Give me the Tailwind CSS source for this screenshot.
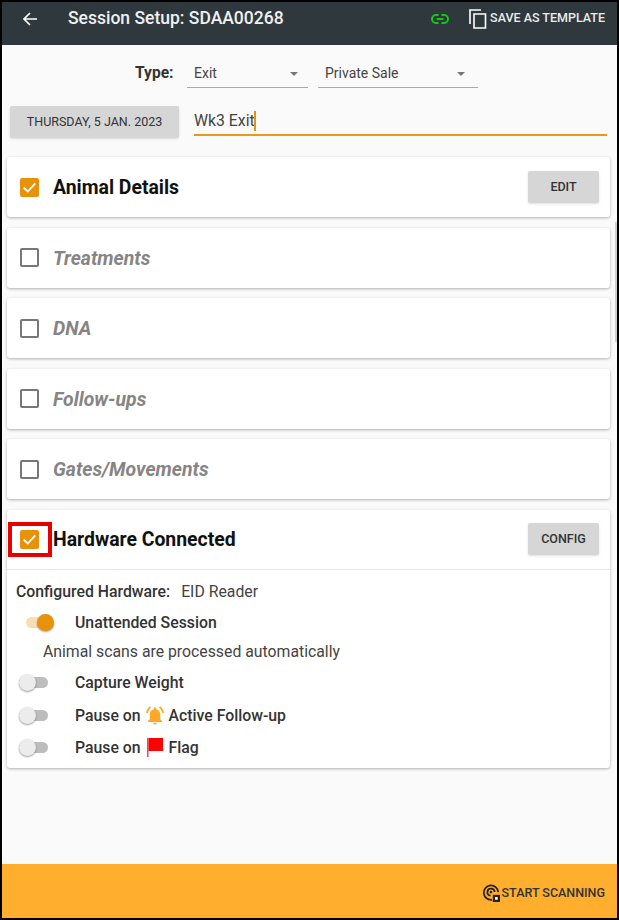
<!DOCTYPE html>
<html lang="en">
<head>
<meta charset="UTF-8">
<title>Session Setup</title>
<script src="https://cdn.jsdelivr.net/npm/@tailwindcss/browser@4"></script>
</head>
<body class="bg-black">
<div class="relative m-[2px] flex h-[916px] w-[615px] flex-col overflow-hidden bg-[#fafafa] font-['Roboto',sans-serif] text-[#212121]">

  <!-- top bar -->
  <header class="flex h-[43px] shrink-0 items-center bg-[#2f383d] pr-[12px] pb-[10px] pl-[20px] text-white">
    <svg class="h-[16px] w-[16px]" viewBox="0 0 16 16" fill="none" stroke="#fff" stroke-width="1.7"><path d="M15 8H2M8 2 2 8l6 6"/></svg>
    <h1 class="ml-[30px] text-[17.5px] font-medium text-[#f0f0f0]">Session Setup: SDAA00268</h1>
    <svg class="ml-auto h-[18px] w-[18px]" viewBox="0 0 18 18" fill="none" stroke="#14c814" stroke-width="2"><path d="M7.5 5H5a4 4 0 0 0 0 8h2.500M10.500 5H13a4 4 0 0 1 0 8h-2.500M5.500 9h7"/></svg>
    <svg class="ml-[20px] h-[20px] w-[18px]" viewBox="0 0 18 20" fill="none" stroke="#fff" stroke-width="1.600"><path d="M1 15V1h11"/><path d="M5 5h11.500v14H5z"/></svg>
    <span class="ml-[3px] text-[12.5px] font-medium text-[#ececec]">SAVE AS TEMPLATE</span>
  </header>

  <div class="flex flex-col px-[5px]">
    <!-- type row -->
    <div class="mt-[14px] flex h-[30px] items-center">
      <span class="ml-[128px] w-[52px] text-[15.6px] font-bold text-[#333]">Type:</span>
      <div class="flex h-[27px] w-[121px] items-center justify-between border-b border-[#aaa] pr-[10px] pl-[7px] text-[14px] text-[#444]">Exit<span class="h-0 w-0 border-x-[4px] border-t-[4px] border-x-transparent border-t-[#777]"></span></div>
      <div class="ml-[10px] flex h-[27px] w-[160px] items-center justify-between border-b border-[#aaa] pr-[13px] pl-[7px] text-[14px] text-[#444]">Private Sale<span class="h-0 w-0 border-x-[4px] border-t-[4px] border-x-transparent border-t-[#777]"></span></div>
    </div>
    <!-- date row -->
    <div class="mt-[17px] flex h-[32px] items-start">
      <button class="ml-[3px] flex h-[32px] w-[169px] items-center justify-center rounded-[2px] bg-[#d6d6d6] text-[12.5px] text-[#333] shadow-sm">THURSDAY, 5 JAN. 2023</button>
      <div class="ml-[15px] flex h-[30px] w-[413px] items-center border-b-2 border-[#e69a1c] pt-[2px] text-[15.8px] text-[#444]"><span>Wk3 Exit</span><span class="ml-[-1px] h-[20px] w-[2px] bg-[#e8920c]"></span></div>
    </div>

    <!-- section cards -->
    <section class="mt-[19px] flex h-[60px] w-[603px] items-center rounded-[3px] bg-white pr-[11px] pl-[13px] shadow-[0_1px_3px_rgba(0,0,0,0.3)]">
      <span class="flex h-[19px] w-[19px] items-center justify-center rounded-[2px] bg-[#e8920c]"><svg class="h-[15px] w-[15px]" viewBox="0 0 13 13" fill="none" stroke="#fff" stroke-width="1.600"><path d="M1.500 6.500 5 10l6.500-7"/></svg></span>
      <span class="ml-[14px] pt-[2px] text-[19.4px] font-bold text-[#111]">Animal Details</span>
      <button class="ml-auto h-[32px] w-[71px] rounded-[2px] bg-[#d6d6d6] text-[12.5px] font-medium text-[#333] shadow-sm">EDIT</button>
    </section>
    <section class="mt-[10.5px] flex h-[60px] w-[603px] items-center rounded-[3px] bg-white pl-[13px] shadow-[0_1px_3px_rgba(0,0,0,0.3)]">
      <span class="h-[19px] w-[19px] rounded-[2px] border-2 border-[#777]"></span>
      <span class="ml-[14px] pt-[2px] text-[19.4px] font-bold text-[#858585] italic">Treatments</span>
    </section>
    <section class="mt-[10.5px] flex h-[60px] w-[603px] items-center rounded-[3px] bg-white pl-[13px] shadow-[0_1px_3px_rgba(0,0,0,0.3)]">
      <span class="h-[19px] w-[19px] rounded-[2px] border-2 border-[#777]"></span>
      <span class="ml-[14px] pt-[2px] text-[19.4px] font-bold text-[#858585] italic">DNA</span>
    </section>
    <section class="mt-[10.5px] flex h-[60px] w-[603px] items-center rounded-[3px] bg-white pl-[13px] shadow-[0_1px_3px_rgba(0,0,0,0.3)]">
      <span class="h-[19px] w-[19px] rounded-[2px] border-2 border-[#777]"></span>
      <span class="ml-[14px] pt-[2px] text-[19.4px] font-bold text-[#858585] italic">Follow-ups</span>
    </section>
    <section class="mt-[10.5px] flex h-[60px] w-[603px] items-center rounded-[3px] bg-white pl-[13px] shadow-[0_1px_3px_rgba(0,0,0,0.3)]">
      <span class="h-[19px] w-[19px] rounded-[2px] border-2 border-[#777]"></span>
      <span class="ml-[14px] pt-[2px] text-[19.4px] font-bold text-[#858585] italic">Gates/Movements</span>
    </section>

    <!-- hardware card -->
    <section class="mt-[10.5px] h-[258px] w-[603px] rounded-[3px] bg-white shadow-[0_1px_3px_rgba(0,0,0,0.3)]">
      <div class="flex h-[60px] items-center border-b border-[#e8e8e8] pr-[11px] pl-[13px]">
        <span class="relative flex h-[19px] w-[19px] items-center justify-center rounded-[2px] bg-[#e8920c]">
          <svg class="h-[15px] w-[15px]" viewBox="0 0 13 13" fill="none" stroke="#fff" stroke-width="1.600"><path d="M1.500 6.500 5 10l6.500-7"/></svg>
          <!-- red annotation box -->
          <span class="absolute top-[-8px] left-[-12px] h-[35px] w-[44px] border-4 border-[#e60000]"></span>
        </span>
        <span class="ml-[14px] pt-[2px] text-[19.4px] font-bold text-[#111]">Hardware Connected</span>
        <button class="ml-auto h-[32px] w-[71px] rounded-[2px] bg-[#d6d6d6] text-[12.5px] font-medium text-[#333] shadow-sm">CONFIG</button>
      </div>
      <div class="mt-[12px] flex h-[20px] items-center pl-[9px] text-[15.8px]">
        <span class="font-medium text-[#333]">Configured Hardware:</span>
        <span class="ml-[11px] text-[#444]">EID Reader</span>
      </div>
      <div class="mt-[11px] flex h-[20px] items-center pl-[19px]">
        <span class="relative block h-[11px] w-[24px] rounded-full bg-[#f8deb4]"><span class="absolute top-[-3px] right-[-4px] h-[17px] w-[17px] rounded-full bg-[#e8920c] shadow-[0_1px_2px_rgba(0,0,0,0.4)]"></span></span>
        <span class="ml-[25px] text-[15.8px] font-medium text-[#333]">Unattended Session</span>
      </div>
      <div class="mt-[9px] flex h-[20px] items-center pl-[36px] text-[15.8px] text-[#444]">Animal scans are processed automatically</div>
      <div class="mt-[11px] flex h-[20px] items-center pl-[12px]">
        <span class="relative block h-[11px] w-[29px] rounded-full bg-[#bdbdbd]"><span class="absolute top-[-3px] left-0 h-[17px] w-[17px] rounded-full bg-[#ececec] shadow-[0_1px_2px_rgba(0,0,0,0.4)]"></span></span>
        <span class="ml-[27px] text-[15.8px] font-medium text-[#333]">Capture Weight</span>
      </div>
      <div class="mt-[13px] flex h-[20px] items-center pl-[12px]">
        <span class="relative block h-[11px] w-[29px] rounded-full bg-[#bdbdbd]"><span class="absolute top-[-3px] left-0 h-[17px] w-[17px] rounded-full bg-[#ececec] shadow-[0_1px_2px_rgba(0,0,0,0.4)]"></span></span>
        <span class="ml-[27px] text-[15.8px] font-medium text-[#333]">Pause on</span>
        <svg class="mr-[5px] ml-[5px] h-[19px] w-[18px]" viewBox="2 1 20 21.500" fill="#ffa726"><path d="M12 22c1.100 0 2-.9 2-2h-4c0 1.100.9 2 2 2zm6-6v-5c0-3.100-1.600-5.600-4.500-6.300V4c0-.8-.7-1.500-1.500-1.500s-1.500.7-1.500 1.500v.7C7.600 5.400 6 7.900 6 11v5l-2 2v1h16v-1l-2-2z"/><path d="M7.600 2.600 6.200 1.200C3.800 3 2.200 5.800 2 9h2c.2-2.600 1.600-5 3.600-6.400zM20 9h2c-.2-3.200-1.800-6-4.200-7.800l-1.400 1.400c2 1.400 3.400 3.800 3.600 6.400z"/></svg>
        <span class="text-[15.8px] font-medium text-[#333]">Active Follow-up</span>
      </div>
      <div class="mt-[12px] flex h-[20px] items-center pl-[12px]">
        <span class="relative block h-[11px] w-[29px] rounded-full bg-[#bdbdbd]"><span class="absolute top-[-3px] left-0 h-[17px] w-[17px] rounded-full bg-[#ececec] shadow-[0_1px_2px_rgba(0,0,0,0.4)]"></span></span>
        <span class="ml-[27px] text-[15.8px] font-medium text-[#333]">Pause on</span>
        <svg class="mr-[6px] ml-[6px] h-[19px] w-[16px]" viewBox="0 0 16 19"><path d="M0 0h1.500v19H0z" fill="#f44"/><path d="M1.500 0H16v13H1.500z" fill="#f00"/></svg>
        <span class="text-[15.8px] font-medium text-[#333]">Flag</span>
      </div>
    </section>
  </div>

  <!-- footer -->
  <footer class="mt-auto flex h-[54px] shrink-0 items-center justify-end bg-[#ffae2e] pt-[4px] pr-[12px]">
    <svg class="mr-[2px] h-[18px] w-[18px]" viewBox="0 0 20 20" fill="none" stroke="#222" stroke-width="2"><path d="M11 17.500A8 8 0 1 1 18 9"/><path d="M9.500 13A4 4 0 1 1 14 9"/><circle cx="10" cy="9" r="1.500" fill="#222" stroke="none"/><rect x="12" y="12" width="8" height="8" fill="#222" stroke="none"/><rect x="14.500" y="14.500" width="3" height="3" fill="#fff" stroke="none"/></svg>
    <span class="text-[12.5px] font-medium text-[#333]">START SCANNING</span>
  </footer>

  <!-- scroll indicator -->
  <div class="absolute top-[220px] right-0 h-[120px] w-[2px] bg-[#d0d0d0]"></div>
</div>
</body>
</html>
